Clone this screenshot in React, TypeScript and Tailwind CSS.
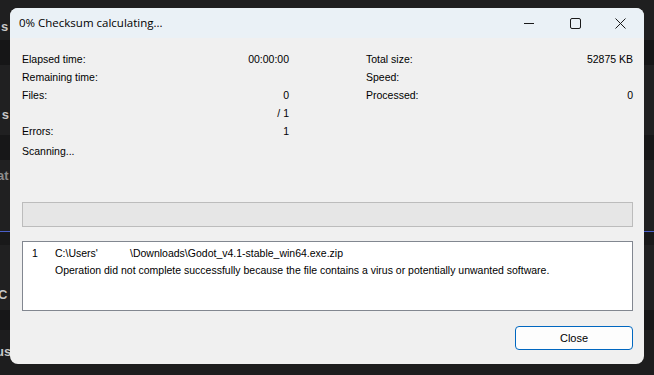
import React from 'react';

const bodyFont = { fontFamily: '"Liberation Sans", Arial, sans-serif' };

const InfoRow = ({ label, value }: { label: string; value?: string }) => (
    <div className="flex h-[18px] items-center justify-between">
        <span>{label}</span>
        <span>{value}</span>
    </div>
);

export default function App() {
    return (
        <div className="relative h-[375px] w-[654px] overflow-hidden bg-[#202020]" style={bodyFont}>
            {/* app behind the dialog */}
            <div className="flex flex-col">
                <div className="h-[40px] bg-[#1f1f20]" />
                <div className="h-[25px] bg-[#161617]" />
                <div className="h-[70px] bg-[#202021]" />
                <div className="h-[25px] bg-[#171718]" />
                <div className="h-[71px] bg-[#202021]" />
                <div className="h-px bg-[#4a5fc9]" />
                <div className="h-[13px] bg-[#19191a]" />
                <div className="h-[65px] bg-[#202021]" />
                <div className="h-[20px] bg-[#171718]" />
                <div className="h-[45px] bg-[#1d1d1e]" />
            </div>
            <div className="absolute left-0 top-0 h-[375px] w-[10px] overflow-hidden text-[13px] font-bold leading-[18px] text-[#c8c8c8]">
                <span className="absolute left-[1px] top-[18px]">s</span>
                <span className="absolute left-[-9px] top-[106px] whitespace-nowrap">k s</span>
                <span className="absolute left-[-3px] top-[167px] text-[#8c8c8c]">at</span>
                <span className="absolute left-[-2px] top-[286px]">C</span>
                <span className="absolute left-[-4px] top-[343px]">us</span>
            </div>

            {/* dialog window */}
            <div className="absolute left-[10px] top-[8px] flex h-[356px] w-[634px] flex-col overflow-hidden rounded-[8px] bg-[#f0f0f0] text-[10.5px] text-black">
                <div className="flex h-[30px] items-center bg-[#eaf1f6]">
                    <span className="pl-[9px] text-[11.5px] text-black" style={{ fontFamily: '"Open Sans", sans-serif' }}>
                        0% Checksum calculating...
                    </span>
                    <div className="ml-auto flex h-full">
                        <div className="flex w-[46px] items-center justify-center">
                            <svg width="10" height="10" viewBox="0 0 10 10">
                                <path d="M0 5.5h10" stroke="#1a1a1a" strokeWidth="1" />
                            </svg>
                        </div>
                        <div className="flex w-[46px] items-center justify-center">
                            <svg width="11" height="11" viewBox="0 0 11 11">
                                <rect x="0.5" y="0.5" width="10" height="10" rx="1.5" fill="none" stroke="#1a1a1a" strokeWidth="1" />
                            </svg>
                        </div>
                        <div className="flex w-[46px] items-center justify-center pr-[2px]">
                            <svg width="11" height="11" viewBox="0 0 11 11">
                                <path d="M0.5 0.5l10 10M10.5 0.5l-10 10" stroke="#1a1a1a" strokeWidth="1" />
                            </svg>
                        </div>
                    </div>
                </div>

                <div className="flex flex-1 flex-col pl-[12px] pr-[11px] pt-[13px] pb-[14px]">
                    <div className="grid grid-cols-2 gap-x-[77px]">
                        <div className="flex flex-col">
                            <InfoRow label="Elapsed time:" value="00:00:00" />
                            <InfoRow label="Remaining time:" />
                            <InfoRow label="Files:" value="0" />
                            <InfoRow label="" value="/ 1" />
                            <InfoRow label="Errors:" value="1" />
                            <div className="flex h-[20px] items-center pt-[2px]">Scanning...</div>
                        </div>
                        <div className="flex flex-col">
                            <InfoRow label="Total size:" value="52875 KB" />
                            <InfoRow label="Speed:" />
                            <InfoRow label="Processed:" value="0" />
                        </div>
                    </div>

                    <div className="mt-[41px] h-[25px] border border-[#bcbcbc] bg-[#e6e6e6]" />

                    <div className="mt-[14px] h-[70px] border border-[#828790] bg-white pt-[3px]">
                        <div className="flex leading-[17px]">
                            <span className="w-[32px] pl-[9px]">1</span>
                            <div className="flex flex-col">
                                <div className="flex">
                                    <span className="w-[75px]">C:\Users'</span>
                                    <span>\Downloads\Godot_v4.1-stable_win64.exe.zip</span>
                                </div>
                                <span>Operation did not complete successfully because the file contains a virus or potentially unwanted software.</span>
                            </div>
                        </div>
                    </div>

                    <div className="mt-auto flex justify-end">
                        <button className="h-[24px] w-[118px] rounded-[4px] border border-[#0067c0] bg-[#fdfdfd] text-[11px] text-black">
                            Close
                        </button>
                    </div>
                </div>
            </div>
        </div>
    );
}
